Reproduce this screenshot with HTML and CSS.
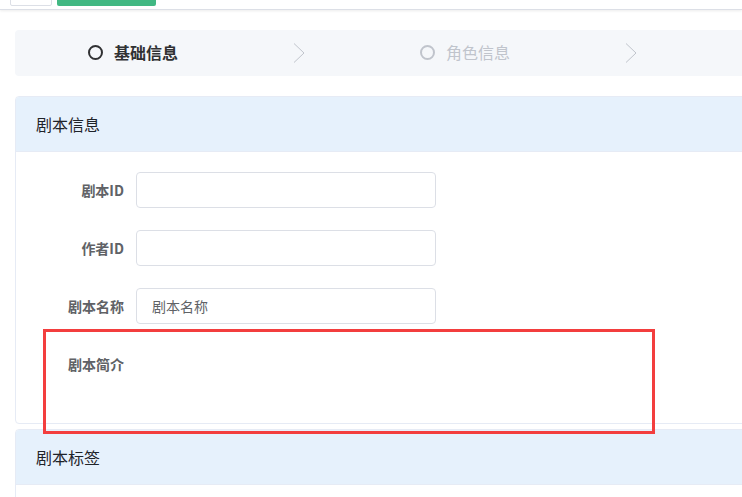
FILE: index.html
```html
<!DOCTYPE html>
<html lang="zh">
<head>
<meta charset="utf-8">
<title>剧本信息</title>
<link rel="stylesheet" href="styles.css">
</head>
<body>
<div class="topbar">
  <span class="btn btn-white"></span>
  <span class="btn btn-green"></span>
</div>
<main class="content">
  <div class="steps">
    <div class="step active">
      <span class="step-icon"></span>
      <span class="step-title">基础信息</span>
      <span class="step-arrow"><svg width="12" height="20" viewBox="0 0 12 20"><polyline points="1,0.5 11,10 1,19.5" fill="none" stroke="#c0c4cc" stroke-width="1"/></svg></span>
    </div>
    <div class="step">
      <span class="step-icon"></span>
      <span class="step-title">角色信息</span>
      <span class="step-arrow"><svg width="12" height="20" viewBox="0 0 12 20"><polyline points="1,0.5 11,10 1,19.5" fill="none" stroke="#c0c4cc" stroke-width="1"/></svg></span>
    </div>
  </div>

  <section class="card">
    <div class="card-header">剧本信息</div>
    <div class="card-body">
      <div class="form-item">
        <label class="form-label">剧本ID</label>
        <input class="form-input" type="text">
      </div>
      <div class="form-item">
        <label class="form-label">作者ID</label>
        <input class="form-input" type="text">
      </div>
      <div class="form-item">
        <label class="form-label">剧本名称</label>
        <input class="form-input" type="text" value="剧本名称">
      </div>
      <div class="form-item">
        <label class="form-label">剧本简介</label>
      </div>
    </div>
  </section>

  <section class="card">
    <div class="card-header">剧本标签</div>
    <div class="card-body"></div>
  </section>
</main>
<div class="annotation"></div>
</body>
</html>
```

FILE: styles.css
```css
html, body {
  margin: 0;
  padding: 0;
  background: #ffffff;
  overflow: hidden;
}

body {
  font-family: "Noto Sans CJK SC", "Noto Sans", "Liberation Sans", sans-serif;
  width: 742px;
  height: 497px;
  position: relative;
}

.topbar {
  height: 9px;
  display: flex;
  align-items: flex-end;
  gap: 5px;
  padding-left: 10px;
  border-bottom: 1px solid #dcdfe6;
  box-shadow: 0 1px 3px rgba(0, 0, 0, 0.08);
  overflow: hidden;
}

.btn {
  display: block;
  height: 28px;
  margin-bottom: 3px;
  box-sizing: border-box;
  border-radius: 0 0 2px 2px;
}

.btn-white {
  width: 42px;
  border: 1px solid #dcdfe6;
  background: #fff;
}

.btn-green {
  width: 99px;
  background: #41b883;
}

.content {
  width: 1100px;
  padding: 20px 0 0 15px;
}

.steps {
  height: 46px;
  background: #f5f7fa;
  border-radius: 4px;
  display: flex;
  align-items: center;
  padding-left: 73px;
}

.step {
  width: 332px;
  flex: none;
  display: flex;
  align-items: center;
  margin-bottom: 1px;
}

.step-icon {
  width: 15px;
  height: 15px;
  box-sizing: border-box;
  border: 2px solid #c0c4cc;
  border-radius: 50%;
  flex: none;
}

.step-title {
  margin-left: 11px;
  margin-bottom: 2px;
  font-size: 16px;
  line-height: 20px;
  color: #c0c4cc;
}

.step.active .step-icon {
  border-color: #303133;
}

.step.active .step-title {
  color: #303133;
  font-weight: bold;
}

.step-arrow {
  flex: 1;
  display: flex;
  justify-content: center;
  align-items: center;
  height: 20px;
}

.step-arrow svg {
  display: block;
}

.card {
  margin-top: 20px;
  border: 1px solid #e6ebf5;
  border-radius: 4px;
  overflow: hidden;
}

.card + .card {
  margin-top: 5px;
}

.card-header {
  height: 55px;
  box-sizing: border-box;
  padding: 17px 20px;
  line-height: 20px;
  font-size: 16px;
  color: #1f2329;
  background: #e6f1fc;
  border-bottom: 1px solid #e6ebf5;
}

.card-body {
  padding: 20px 20px 19px 20px;
}

.form-item {
  display: flex;
  align-items: center;
  height: 36px;
  margin-bottom: 22px;
}

.form-label {
  width: 100px;
  box-sizing: border-box;
  padding-right: 12px;
  text-align: right;
  font-size: 14px;
  font-weight: bold;
  line-height: 36px;
  color: #606266;
}

.form-input {
  width: 300px;
  height: 36px;
  box-sizing: border-box;
  border: 1px solid #dcdfe6;
  border-radius: 4px;
  padding: 0 15px;
  font-family: inherit;
  font-size: 14px;
  color: #606266;
  background: #fff;
  outline: none;
}

.annotation {
  position: absolute;
  left: 43px;
  top: 329px;
  width: 612px;
  height: 105px;
  box-sizing: border-box;
  border: 3px solid #f33e3e;
}
```
